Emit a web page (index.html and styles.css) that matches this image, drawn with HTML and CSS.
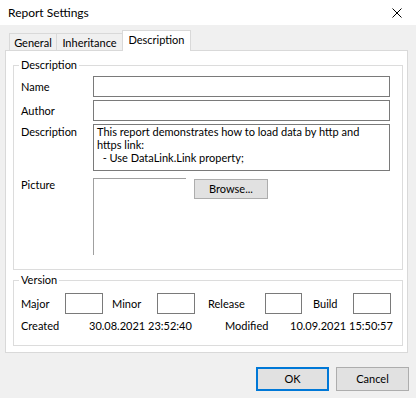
FILE: index.html
```html
<!DOCTYPE html>
<html>
<head>
<meta charset="utf-8">
<title>Report Settings</title>
<link rel="stylesheet" href="styles.css">
</head>
<body>
<div class="dialog">
  <div class="titlebar">
    <span class="title">Report Settings</span>
    <svg class="close" viewBox="0 0 10 10" width="10" height="10"><path d="M0.5 0.5 L9.5 9.5 M9.5 0.5 L0.5 9.5" stroke="#000" stroke-width="1" fill="none"/></svg>
  </div>
  <div class="content">
    <div class="tabs">
      <div class="tab t-general">General</div>
      <div class="tab t-inherit">Inheritance</div>
      <div class="tab t-desc">Description</div>
    </div>
    <div class="page">
      <fieldset class="group group-desc">
        <legend>Description</legend>
        <div class="form">
          <label class="lbl lbl-mid">Name</label>
          <div class="input"></div>
          <label class="lbl lbl-mid">Author</label>
          <div class="input"></div>
          <label class="lbl lbl-top">Description</label>
          <div class="input memo">This report demonstrates how to load data by http and
https link:
  - Use DataLink.Link property;</div>
          <label class="lbl lbl-pic">Picture</label>
          <div class="picture-row">
            <div class="picture"></div>
            <button class="btn browse">Browse...</button>
          </div>
        </div>
      </fieldset>
      <fieldset class="group group-ver">
        <legend>Version</legend>
        <div class="ver-row">
          <label class="lbl">Major</label>
          <div class="input"></div>
          <label class="lbl lbl-minor">Minor</label>
          <div class="input"></div>
          <label class="lbl lbl-release">Release</label>
          <div class="input"></div>
          <label class="lbl lbl-build">Build</label>
          <div class="input"></div>
        </div>
        <div class="dates">
          <span>Created</span>
          <span>30.08.2021 23:52:40</span>
          <span>Modified</span>
          <span>10.09.2021 15:50:57</span>
        </div>
      </fieldset>
    </div>
    <div class="buttons">
      <button class="btn dlg-btn default">OK</button>
      <button class="btn dlg-btn">Cancel</button>
    </div>
  </div>
</div>
</body>
</html>
```
FILE: styles.css
```css
* { box-sizing: border-box; }
html, body { margin: 0; padding: 0; }
body {
  width: 416px;
  height: 398px;
  background: #f0f0f0;
  font-family: Lato, "Noto Sans", sans-serif;
  font-size: 11px;
  color: #000;
  overflow: hidden;
}
.dialog {
  width: 416px;
  height: 398px;
  display: flex;
  flex-direction: column;
}
.titlebar {
  height: 25px;
  flex: none;
  background: #fff;
  display: flex;
  align-items: center;
  justify-content: space-between;
  padding: 0 14px 0 8px;
}
.title { font-size: 12px; line-height: 16px; }
.close { display: block; width: 10px; height: 10px; }

.content {
  flex: 1;
  padding: 5px 8px 0 5px;
  display: flex;
  flex-direction: column;
}
.tabs {
  display: flex;
  align-items: flex-end;
  height: 20px;
  padding-left: 4px;
  position: relative;
  z-index: 1;
}
.tab {
  height: 17px;
  border: 1px solid #d9d9d9;
  border-bottom: none;
  background: #f0f0f0;
  display: flex;
  align-items: center;
  justify-content: center;
  line-height: 14px;
  padding-top: 1px;
}
.t-general { width: 48px; }
.t-inherit { width: 67px; margin-left: -1px; }
.t-desc {
  width: 69px;
  margin-left: -1px;
  height: 21px;
  margin-bottom: -1px;
  background: #fff;
  padding-top: 0;
  padding-bottom: 2px;
}
.page {
  height: 303px;
  background: #fff;
  border: 1px solid #d9d9d9;
  padding: 0 4px 0 7px;
}
.group {
  margin: 7px 0 0 0;
  padding: 4px 12px 14px 7px;
  border: 1px solid #dcdcdc;
  width: 390px;
  min-inline-size: 0;
}
.group legend {
  padding: 0 2px;
  margin-left: -2px;
  line-height: 14px;
}
.group-ver { margin-top: 3px; padding-top: 6px; padding-bottom: 12px; }

.form {
  display: grid;
  grid-template-columns: 72px 297px;
  grid-template-rows: 21px 21px 47px 81px;
  row-gap: 3px;
}
.lbl { line-height: 14px; white-space: nowrap; }
.lbl-mid { align-self: center; }
.lbl-top { line-height: 13px; padding-top: 1px; }
.lbl-pic { margin-top: 4px; }
.input {
  border: 1px solid #7a7a7a;
  background: #fff;
}
.memo {
  white-space: pre;
  overflow: hidden;
  line-height: 13px;
  padding: 0 0 0 3px;
}
.picture-row {
  margin-top: 4px;
  display: flex;
  align-items: flex-start;
}
.picture {
  width: 93px;
  height: 77px;
  border-top: 1px solid #a0a0a0;
  border-left: 1px solid #a0a0a0;
}
.btn {
  font-family: inherit;
  font-size: 11px;
  color: #000;
  background: #e1e1e1;
  border: 1px solid #adadad;
  padding: 0;
  margin: 0;
  line-height: 14px;
}
.browse {
  width: 74px;
  height: 20px;
  margin: 1px 0 0 8px;
}

.ver-row {
  display: grid;
  grid-template-columns: 44px 38px 54px 38px 70px 37px 51px 38px;
  height: 21px;
  align-items: center;
}
.ver-row .input { height: 21px; }
.lbl-minor { padding-left: 9px; }
.lbl-release { padding-left: 13px; }
.lbl-build { padding-left: 11px; }
.dates {
  margin-top: 5px;
  display: grid;
  grid-template-columns: 68px 136px 65px 100px;
  line-height: 14px;
  white-space: nowrap;
}

.buttons {
  margin-top: 14px;
  margin-right: -1px;
  display: flex;
  justify-content: flex-end;
  gap: 7px;
}
.dlg-btn {
  width: 73px;
  height: 24px;
}
.dlg-btn.default {
  border-color: #0078d7;
  box-shadow: inset 0 0 0 1px #0078d7;
}
```
